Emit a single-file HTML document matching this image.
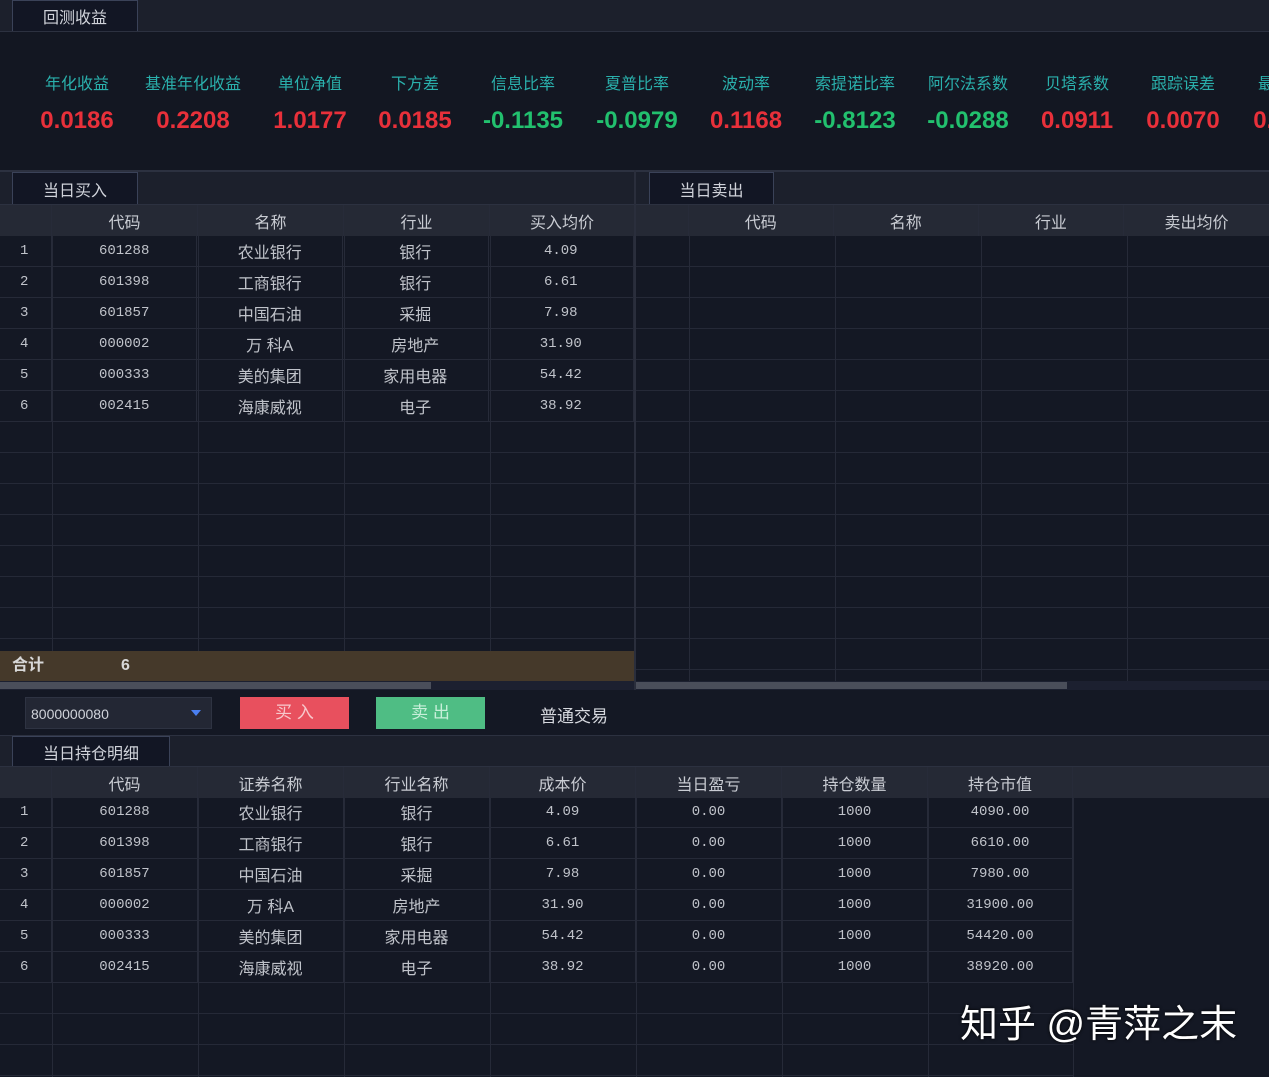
<!DOCTYPE html>
<html><head><meta charset="utf-8"><style>
*{margin:0;padding:0;box-sizing:border-box}
body{width:1269px;height:1077px;background:#141824;position:relative;overflow:hidden;font-family:"Liberation Sans","Noto Sans CJK SC",sans-serif;color:#c9ccd3}
.a{position:absolute}
.bar{background:#1c202c;border-bottom:1px solid #2c3140}
.tab{position:absolute;top:0;height:100%;background:#121624;border:1px solid #3a4258;border-bottom:none;color:#d0d3da;font-size:16px;display:flex;align-items:center;justify-content:center}
.m{position:absolute;text-align:center;width:110px;margin-left:-55px}
.ml{top:70px;font-size:16px;color:#2ab0ac}
.mv{top:107px;font-size:24px;font-weight:bold}
.r{color:#e8303a}.g{color:#22c06e}
.hdr{position:absolute;height:31px;background:#252935;display:flex;font-size:16px;color:#c9ccd3}
.row{position:absolute;height:31px;display:flex;font-size:14px;color:#c0c3ca;font-family:"Liberation Mono","Noto Sans CJK SC",monospace}
.hdr div,.row div{height:100%;display:flex;align-items:center;justify-content:center;border-right:1px solid #272b39}
.row{border-bottom:1px solid #262a38}
.row .t{font-family:"Liberation Sans","Noto Sans CJK SC",sans-serif;font-size:16px}
.grid{position:absolute;background-image:repeating-linear-gradient(to bottom,transparent 0,transparent 30px,#252937 30px,#252937 31px)}
.vl{position:absolute;width:1px;background:#262a38}
.c0{width:52px;justify-content:flex-start!important;padding-left:20px}
.c{width:146px}
</style></head><body>
<div class="a bar" style="left:0;top:0;width:1269px;height:32px"><div class="tab" style="left:12px;width:126px">回测收益</div></div>
<div class="a" style="left:0;top:32px;width:1269px;height:138px;background:#131722"></div>
<div class="m ml" style="left:77px">年化收益</div><div class="m mv r" style="left:77px">0.0186</div>
<div class="m ml" style="left:193px">基准年化收益</div><div class="m mv r" style="left:193px">0.2208</div>
<div class="m ml" style="left:310px">单位净值</div><div class="m mv r" style="left:310px">1.0177</div>
<div class="m ml" style="left:415px">下方差</div><div class="m mv r" style="left:415px">0.0185</div>
<div class="m ml" style="left:523px">信息比率</div><div class="m mv g" style="left:523px">-0.1135</div>
<div class="m ml" style="left:637px">夏普比率</div><div class="m mv g" style="left:637px">-0.0979</div>
<div class="m ml" style="left:746px">波动率</div><div class="m mv r" style="left:746px">0.1168</div>
<div class="m ml" style="left:855px">索提诺比率</div><div class="m mv g" style="left:855px">-0.8123</div>
<div class="m ml" style="left:968px">阿尔法系数</div><div class="m mv g" style="left:968px">-0.0288</div>
<div class="m ml" style="left:1077px">贝塔系数</div><div class="m mv r" style="left:1077px">0.0911</div>
<div class="m ml" style="left:1183px">跟踪误差</div><div class="m mv r" style="left:1183px">0.0070</div>
<div class="m ml" style="left:1290px">最大回撤</div><div class="m mv r" style="left:1290px">0.0500</div>

<div class="a bar" style="left:0;top:170px;width:634px;height:35px;border-top:2px solid #2c3140"><div class="tab" style="left:12px;width:126px">当日买入</div></div>
<div class="a bar" style="left:636px;top:170px;width:633px;height:35px;border-top:2px solid #2c3140"><div class="tab" style="left:13px;width:125px">当日卖出</div></div>
<div class="a" style="left:634px;top:170px;width:2px;height:520px;background:#2a2e3c"></div>

<div class="grid" style="left:0;top:236px;width:634px;height:415px"></div>
<div class="vl" style="left:52px;top:205px;height:446px"></div><div class="vl" style="left:198px;top:205px;height:446px"></div><div class="vl" style="left:344px;top:205px;height:446px"></div><div class="vl" style="left:490px;top:205px;height:446px"></div>
<div class="hdr" style="left:0;top:205px;width:634px"><div class="c0"></div><div class="c">代码</div><div class="c">名称</div><div class="c">行业</div><div class="c" style="width:144px;border:none">买入均价</div></div>
<div class="row" style="left:0;top:236px;width:634px"><div class="c0">1</div><div class="c">601288</div><div class="c t">农业银行</div><div class="c t">银行</div><div class="c">4.09</div></div>
<div class="row" style="left:0;top:267px;width:634px"><div class="c0">2</div><div class="c">601398</div><div class="c t">工商银行</div><div class="c t">银行</div><div class="c">6.61</div></div>
<div class="row" style="left:0;top:298px;width:634px"><div class="c0">3</div><div class="c">601857</div><div class="c t">中国石油</div><div class="c t">采掘</div><div class="c">7.98</div></div>
<div class="row" style="left:0;top:329px;width:634px"><div class="c0">4</div><div class="c">000002</div><div class="c t">万 科A</div><div class="c t">房地产</div><div class="c">31.90</div></div>
<div class="row" style="left:0;top:360px;width:634px"><div class="c0">5</div><div class="c">000333</div><div class="c t">美的集团</div><div class="c t">家用电器</div><div class="c">54.42</div></div>
<div class="row" style="left:0;top:391px;width:634px"><div class="c0">6</div><div class="c">002415</div><div class="c t">海康威视</div><div class="c t">电子</div><div class="c">38.92</div></div>
<div class="a" style="left:0;top:651px;width:634px;height:30px;background:#45392a;font-size:16px;font-weight:bold;color:#d8d8d8;line-height:30px"><span class="a" style="left:12px;top:0">合计</span><span class="a" style="left:121px;top:0">6</span></div>
<div class="a" style="left:0;top:681px;width:634px;height:9px;background:#1c2030"><div class="a" style="left:0;top:1px;width:431px;height:7px;background:#4a4e5a"></div></div>

<div class="grid" style="left:636px;top:236px;width:633px;height:445px"></div>
<div class="vl" style="left:689px;top:205px;height:476px"></div><div class="vl" style="left:835px;top:205px;height:476px"></div><div class="vl" style="left:981px;top:205px;height:476px"></div><div class="vl" style="left:1127px;top:205px;height:476px"></div>
<div class="hdr" style="left:636px;top:205px;width:633px"><div style="width:53px"></div><div class="c">代码</div><div class="c">名称</div><div class="c">行业</div><div class="c" style="border:none">卖出均价</div></div>
<div class="a" style="left:636px;top:681px;width:633px;height:9px;background:#1c2030"><div class="a" style="left:0;top:1px;width:431px;height:7px;background:#4a4e5a"></div></div>

<div class="a" style="left:25px;top:697px;width:187px;height:32px;background:#232734;border:1px solid #2e3342;font-size:14px;color:#d0d3da;padding:8px 0 0 5px">8000000080<span class="a" style="right:10px;top:12px;width:0;height:0;border-left:5px solid transparent;border-right:5px solid transparent;border-top:6px solid #4a7ff0"></span></div>
<div class="a" style="left:240px;top:697px;width:109px;height:32px;background:#e8505e;color:#f7c8cc;font-size:17px;text-align:center;line-height:32px">买 入</div>
<div class="a" style="left:376px;top:697px;width:109px;height:32px;background:#4fbd84;color:#c8efda;font-size:17px;text-align:center;line-height:32px">卖 出</div>
<div class="a" style="left:540px;top:702px;font-size:17px;color:#d6d8de">普通交易</div>

<div class="a bar" style="left:0;top:735px;width:1269px;height:32px;border-top:1px solid #2c3140"><div class="tab" style="left:12px;width:158px">当日持仓明细</div></div>
<div class="grid" style="left:0;top:797px;width:1073px;height:280px"></div>
<div class="vl" style="left:52px;top:767px;height:310px"></div><div class="vl" style="left:198px;top:767px;height:310px"></div><div class="vl" style="left:344px;top:767px;height:310px"></div><div class="vl" style="left:490px;top:767px;height:310px"></div><div class="vl" style="left:636px;top:767px;height:310px"></div><div class="vl" style="left:782px;top:767px;height:310px"></div><div class="vl" style="left:928px;top:767px;height:310px"></div><div class="vl" style="left:1073px;top:767px;height:310px"></div>
<div class="hdr" style="left:0;top:767px;width:1269px"><div class="c0"></div><div class="c">代码</div><div class="c">证券名称</div><div class="c">行业名称</div><div class="c">成本价</div><div class="c">当日盈亏</div><div class="c">持仓数量</div><div class="c" style="width:145px">持仓市值</div></div>
<div class="row" style="left:0;top:797px;width:1073px"><div class="c0">1</div><div class="c">601288</div><div class="c t">农业银行</div><div class="c t">银行</div><div class="c">4.09</div><div class="c">0.00</div><div class="c">1000</div><div class="c" style="width:145px">4090.00</div></div>
<div class="row" style="left:0;top:828px;width:1073px"><div class="c0">2</div><div class="c">601398</div><div class="c t">工商银行</div><div class="c t">银行</div><div class="c">6.61</div><div class="c">0.00</div><div class="c">1000</div><div class="c" style="width:145px">6610.00</div></div>
<div class="row" style="left:0;top:859px;width:1073px"><div class="c0">3</div><div class="c">601857</div><div class="c t">中国石油</div><div class="c t">采掘</div><div class="c">7.98</div><div class="c">0.00</div><div class="c">1000</div><div class="c" style="width:145px">7980.00</div></div>
<div class="row" style="left:0;top:890px;width:1073px"><div class="c0">4</div><div class="c">000002</div><div class="c t">万 科A</div><div class="c t">房地产</div><div class="c">31.90</div><div class="c">0.00</div><div class="c">1000</div><div class="c" style="width:145px">31900.00</div></div>
<div class="row" style="left:0;top:921px;width:1073px"><div class="c0">5</div><div class="c">000333</div><div class="c t">美的集团</div><div class="c t">家用电器</div><div class="c">54.42</div><div class="c">0.00</div><div class="c">1000</div><div class="c" style="width:145px">54420.00</div></div>
<div class="row" style="left:0;top:952px;width:1073px"><div class="c0">6</div><div class="c">002415</div><div class="c t">海康威视</div><div class="c t">电子</div><div class="c">38.92</div><div class="c">0.00</div><div class="c">1000</div><div class="c" style="width:145px">38920.00</div></div>

<div class="a" style="left:960px;top:993px;font-size:38px;color:#ffffff;white-space:nowrap;text-shadow:0 0 3px #000">知乎 @青萍之末</div>
</body></html>
